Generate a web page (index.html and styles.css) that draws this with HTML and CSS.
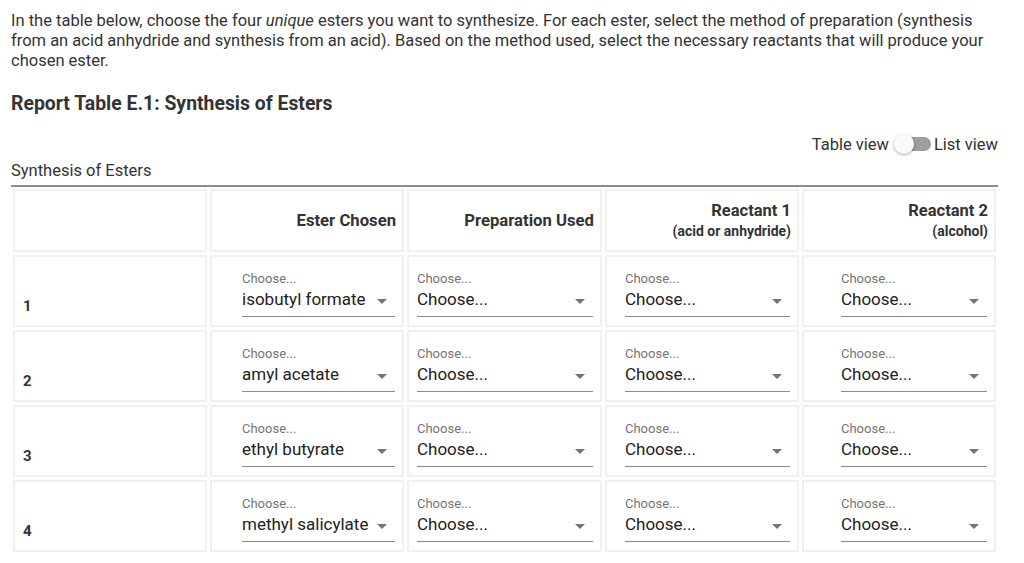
FILE: index.html
```html
<!DOCTYPE html>
<html>
<head>
<meta charset="utf-8">
<link rel="stylesheet" href="styles.css">
</head>
<body>
<div class="page">
  <p class="intro">In the table below, choose the four <em>unique</em> esters you want to synthesize. For each ester, select the method of preparation (synthesis from an acid anhydride and synthesis from an acid). Based on the method used, select the necessary reactants that will produce your chosen ester.</p>
  <h2 class="title">Report Table E.1: Synthesis of Esters</h2>
  <div class="toggle-row">
    <span class="tlabel">Table view</span>
    <span class="switch"><span class="track"></span><span class="thumb"></span></span>
    <span class="tlabel">List view</span>
  </div>
  <div class="caption">Synthesis of Esters</div>
  <div class="grid">
    <div class="cell head"></div>
    <div class="cell head"><div class="h1">Ester Chosen</div></div>
    <div class="cell head"><div class="h1">Preparation Used</div></div>
    <div class="cell head"><div class="h2">Reactant 1</div><div class="h3">(acid or anhydride)</div></div>
    <div class="cell head"><div class="h2">Reactant 2</div><div class="h3">(alcohol)</div></div>

    <div class="cell num">1</div>
    <div class="cell sel"><div class="select w2"><div class="lab">Choose...</div><div class="val"><span>isobutyl formate</span><span class="arrow"></span></div></div></div>
    <div class="cell sel"><div class="select w3"><div class="lab">Choose...</div><div class="val"><span>Choose...</span><span class="arrow"></span></div></div></div>
    <div class="cell sel"><div class="select w4"><div class="lab">Choose...</div><div class="val"><span>Choose...</span><span class="arrow"></span></div></div></div>
    <div class="cell sel"><div class="select w5"><div class="lab">Choose...</div><div class="val"><span>Choose...</span><span class="arrow"></span></div></div></div>

    <div class="cell num">2</div>
    <div class="cell sel"><div class="select w2"><div class="lab">Choose...</div><div class="val"><span>amyl acetate</span><span class="arrow"></span></div></div></div>
    <div class="cell sel"><div class="select w3"><div class="lab">Choose...</div><div class="val"><span>Choose...</span><span class="arrow"></span></div></div></div>
    <div class="cell sel"><div class="select w4"><div class="lab">Choose...</div><div class="val"><span>Choose...</span><span class="arrow"></span></div></div></div>
    <div class="cell sel"><div class="select w5"><div class="lab">Choose...</div><div class="val"><span>Choose...</span><span class="arrow"></span></div></div></div>

    <div class="cell num">3</div>
    <div class="cell sel"><div class="select w2"><div class="lab">Choose...</div><div class="val"><span>ethyl butyrate</span><span class="arrow"></span></div></div></div>
    <div class="cell sel"><div class="select w3"><div class="lab">Choose...</div><div class="val"><span>Choose...</span><span class="arrow"></span></div></div></div>
    <div class="cell sel"><div class="select w4"><div class="lab">Choose...</div><div class="val"><span>Choose...</span><span class="arrow"></span></div></div></div>
    <div class="cell sel"><div class="select w5"><div class="lab">Choose...</div><div class="val"><span>Choose...</span><span class="arrow"></span></div></div></div>

    <div class="cell num">4</div>
    <div class="cell sel"><div class="select w2"><div class="lab">Choose...</div><div class="val"><span>methyl salicylate</span><span class="arrow"></span></div></div></div>
    <div class="cell sel"><div class="select w3"><div class="lab">Choose...</div><div class="val"><span>Choose...</span><span class="arrow"></span></div></div></div>
    <div class="cell sel"><div class="select w4"><div class="lab">Choose...</div><div class="val"><span>Choose...</span><span class="arrow"></span></div></div></div>
    <div class="cell sel"><div class="select w5"><div class="lab">Choose...</div><div class="val"><span>Choose...</span><span class="arrow"></span></div></div></div>
  </div>
</div>
</body>
</html>
```

FILE: styles.css
```css
html, body {
  margin: 0;
  padding: 0;
  background: #ffffff;
}
body {
  font-family: Roboto, "Liberation Sans", sans-serif;
  color: #333333;
}
.page {
  width: 987px;
  padding: 11px 0 0 11px;
}
.intro {
  margin: 0;
  font-size: 16.5px;
  line-height: 20px;
  color: #333333;
}
.title {
  margin: 21px 0 0 0;
  font-size: 19.4px;
  line-height: 24px;
  font-weight: 700;
  color: #333333;
}
.toggle-row {
  display: flex;
  justify-content: flex-end;
  align-items: center;
  margin-top: 17px;
  height: 22px;
  font-size: 16.5px;
  color: #333333;
}
.switch {
  position: relative;
  width: 37px;
  height: 22px;
  margin: 0 3px 0 5px;
}
.track {
  position: absolute;
  left: 8px;
  top: 4px;
  width: 29px;
  height: 14px;
  border-radius: 7px;
  background: #9e9e9e;
}
.thumb {
  position: absolute;
  left: 0;
  top: 1px;
  width: 20px;
  height: 20px;
  border-radius: 50%;
  background: #fafafa;
  box-shadow: 0 1px 3px rgba(0,0,0,0.35);
}
.caption {
  margin-top: 6px;
  font-size: 16.5px;
  line-height: 20px;
  padding-bottom: 4px;
  border-bottom: 2px solid #8c8c8c;
  color: #333333;
}
.grid {
  display: grid;
  grid-template-columns: repeat(5, 1fr);
  grid-template-rows: 63px repeat(4, 72px);
  gap: 3px;
  padding: 2px;
}
.cell {
  border: 2px solid #f0f0ee;
  padding: 0 7px 8px 8px;
  display: flex;
  flex-direction: column;
}
.head {
  justify-content: center;
  align-items: flex-end;
  text-align: right;
  padding: 0 6px 0 8px;
  color: #333333;
}
.h1 {
  font-size: 16.7px;
  font-weight: 700;
}
.h2 {
  font-size: 16.5px;
  font-weight: 700;
  line-height: 20px;
}
.h3 {
  font-size: 14px;
  font-weight: 700;
  line-height: 20px;
}
.num {
  justify-content: flex-end;
  font-size: 15px;
  font-weight: 700;
  color: #333333;
  padding-bottom: 10px;
}
.sel {
  justify-content: flex-end;
  align-items: flex-end;
}
.select {
  border-bottom: 1px solid #8a8a8a;
}
.w2 { width: 153px; }
.w3 { width: 176px; }
.w4 { width: 165px; }
.w5 { width: 146px; }
.lab {
  font-size: 13px;
  line-height: 14px;
  color: #757575;
}
.val {
  display: flex;
  justify-content: space-between;
  align-items: center;
  font-size: 17px;
  line-height: 20px;
  color: #222222;
  padding: 3px 0 7px 0;
}
.arrow {
  width: 0;
  height: 0;
  border-left: 5px solid transparent;
  border-right: 5px solid transparent;
  border-top: 5px solid #757575;
  margin: 5px 8px 0 0;
}
```
